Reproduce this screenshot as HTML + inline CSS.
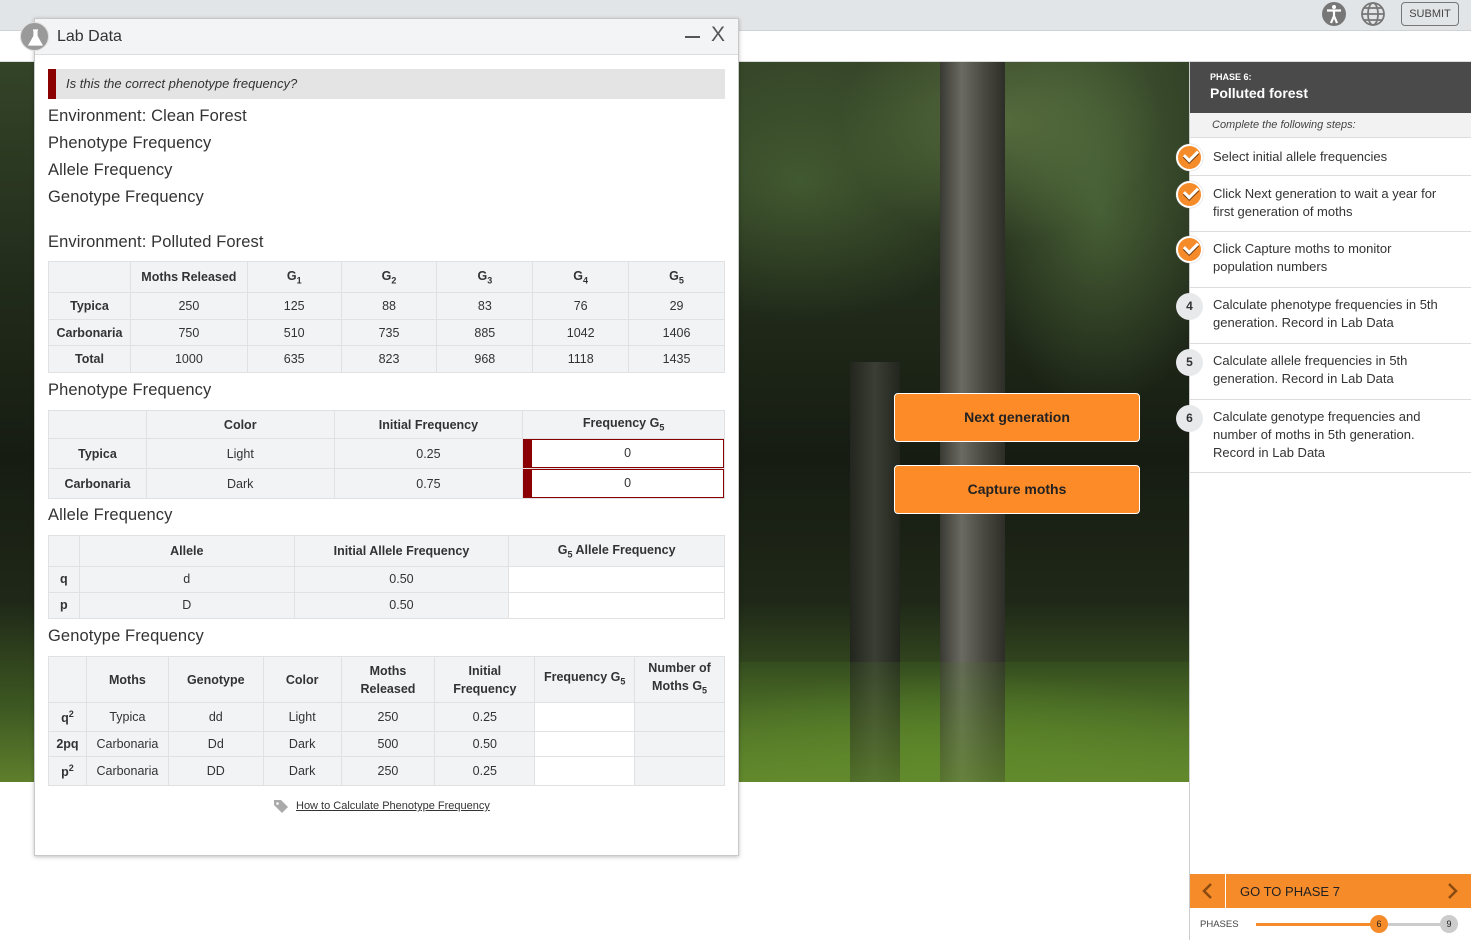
<!DOCTYPE html>
<html><head><meta charset="utf-8"><style>
*{box-sizing:border-box;margin:0;padding:0}
body{width:1471px;height:940px;position:relative;overflow:hidden;background:#fff;font-family:"Liberation Sans",sans-serif;color:#333}
.abs{position:absolute}
.topbar{left:0;top:0;width:1471px;height:31px;background:#e2e5e7;border-bottom:1px solid #d0d3d5}
.forest{left:0;top:62px;width:1189px;height:720px;overflow:hidden;
background:
radial-gradient(ellipse 120px 200px at 1100px 150px,rgba(110,150,80,.45),transparent),
radial-gradient(ellipse 200px 140px at 800px 120px,rgba(100,140,70,.4),transparent),
radial-gradient(ellipse 160px 120px at 1000px 60px,rgba(130,160,90,.45),transparent),
radial-gradient(ellipse 300px 90px at 960px 700px,rgba(90,140,40,.8),transparent),
linear-gradient(180deg,#344428 0%,#222c1b 30%,#161c12 55%,#1f2818 75%,#3e5a22 90%,#5f7f2c 100%)}
.modal{left:34px;top:18px;width:705px;height:838px;background:#fff;border:1px solid #c8c8c8;box-shadow:0 1px 4px rgba(0,0,0,.25)}
.mhead{left:0;top:0;width:703px;height:36px;background:#f3f4f6;border-bottom:1px solid #ddd}
.h{font-size:16.5px;color:#333;letter-spacing:.1px}
table{border-collapse:collapse;position:absolute;left:13px;width:677px;font-size:12.5px;text-align:center}
td,th{border:1px solid #e0e1e3;background:#f2f3f5;padding:0}
th{font-weight:bold}
td.w{background:#fff}
td.b{font-weight:bold}
td.r{background:#fff;position:relative}
td.r div{position:absolute;left:0;top:0;right:0;bottom:0;border:1px solid #8b0000;border-left:9px solid #8b0000;line-height:26px}
sub,sup{font-size:9px}
.panel{left:1189px;top:62px;width:282px;height:878px;background:#fff;border-left:1px solid #ccc}
.step{position:absolute;left:0;width:282px;border-bottom:1px solid #ddd;font-size:13px;color:#333;line-height:18px;padding-left:23px;padding-right:20px}
.ck{position:absolute;left:-14px;width:27px;height:27px;border-radius:50%;background:#f68b2a;border:2px solid #fff;box-shadow:0 0 1px #999}
.num{position:absolute;left:-14px;width:27px;height:27px;border-radius:50%;background:#e8e9eb;font-size:12px;font-weight:bold;text-align:center;line-height:27px;color:#333}
.btn{left:894px;width:246px;height:49px;background:#fd8b28;border:1px solid #fff;border-radius:4px;font-weight:bold;font-size:14px;text-align:center;line-height:47px;color:#222}
.ck::after{content:"";position:absolute;left:6px;top:4px;width:11px;height:6px;border-left:3px solid #fff;border-bottom:3px solid #fff;transform:rotate(-45deg);box-shadow:-1px 1px 0 #6b3a10}
</style></head><body>
<div class="abs topbar"></div>
<div class="abs" style="left:0;top:31px;width:1471px;height:31px;background:#fff;border-bottom:1px solid #ddd"></div>
<svg class="abs" style="left:1321px;top:1px" width="26" height="26" viewBox="0 0 26 26"><circle cx="13" cy="13" r="12" fill="#777"/><circle cx="13" cy="6" r="2" fill="#fff"/><path d="M6 9.5 L20 9.5 M13 9.5 L13 15 M13 15 L10 22 M13 15 L16 22" stroke="#fff" stroke-width="2.2" fill="none"/></svg>
<svg class="abs" style="left:1360px;top:1px" width="26" height="26" viewBox="0 0 26 26"><g fill="none" stroke="#777" stroke-width="1.8"><circle cx="13" cy="13" r="11"/><ellipse cx="13" cy="13" rx="5" ry="11"/><path d="M2 13h22M4 7h18M4 19h18"/></g></svg>
<div class="abs" style="left:1401px;top:2px;width:58px;height:24px;border:1px solid #777;border-radius:4px;font-size:11px;text-align:center;line-height:22px;color:#444">SUBMIT</div>

<div class="abs forest">
<div class="abs" style="left:940px;top:0;width:65px;height:720px;background:linear-gradient(90deg,#3a3a34,#6a6a62,#4a4a42,#2e2e28)"></div>
<div class="abs" style="left:850px;top:300px;width:50px;height:420px;background:linear-gradient(90deg,#22261e,#3a3e34,#22261e)"></div>
<div class="abs" style="left:740px;top:600px;width:450px;height:120px;background:linear-gradient(180deg,rgba(70,110,35,.2),rgba(100,140,45,.7))"></div>
</div>

<div class="abs btn" style="top:393px">Next generation</div>
<div class="abs btn" style="top:465px">Capture moths</div>

<div class="abs modal">
<div class="abs mhead"><div class="abs" style="left:22px;top:9px;font-size:16px;color:#333">Lab Data</div>
<div class="abs" style="left:650px;top:17px;width:15px;height:2px;background:#555"></div>
<div class="abs" style="left:676px;top:4px;font-size:21px;color:#555">X</div></div>
<div class="abs" style="left:-15px;top:3px;width:29px;height:29px;border-radius:50%;background:#9a9a9a;border:1px solid #ddd"><svg width="29" height="29" viewBox="0 0 29 29"><path d="M12 7h5M13 7v6l-5 9h13l-5-9V7" fill="#fff" stroke="#fff" stroke-width="1.2"/></svg></div>
<div class="abs" style="left:13px;top:50px;width:677px;height:30px;background:#e4e4e4;border-left:8px solid #8b0000;font-style:italic;font-size:13px;line-height:30px;padding-left:10px">Is this the correct phenotype frequency?</div>
<div class="abs h" style="left:13px;top:88px">Environment: Clean Forest</div>
<div class="abs h" style="left:13px;top:115px">Phenotype Frequency</div>
<div class="abs h" style="left:13px;top:142px">Allele Frequency</div>
<div class="abs h" style="left:13px;top:169px">Genotype Frequency</div>
<div class="abs h" style="left:13px;top:214px">Environment: Polluted Forest</div>
<table style="top:242px;height:112px"><colgroup><col width="82"><col width="117"><col width="94"><col width="96"><col width="96"><col width="96"><col width="96"></colgroup>
<tr><th></th><th>Moths Released</th><th>G<sub>1</sub></th><th>G<sub>2</sub></th><th>G<sub>3</sub></th><th>G<sub>4</sub></th><th>G<sub>5</sub></th></tr>
<tr><td class="b">Typica</td><td>250</td><td>125</td><td>88</td><td>83</td><td>76</td><td>29</td></tr>
<tr><td class="b">Carbonaria</td><td>750</td><td>510</td><td>735</td><td>885</td><td>1042</td><td>1406</td></tr>
<tr><td class="b">Total</td><td>1000</td><td>635</td><td>823</td><td>968</td><td>1118</td><td>1435</td></tr></table>
<div class="abs h" style="left:13px;top:362px">Phenotype Frequency</div>
<table style="top:391px;height:88px"><colgroup><col width="98"><col width="188"><col width="189"><col width="202"></colgroup>
<tr style="height:28px"><th></th><th>Color</th><th>Initial Frequency</th><th>Frequency G<sub>5</sub></th></tr>
<tr style="height:30px"><td class="b">Typica</td><td>Light</td><td>0.25</td><td class="r"><div>0</div></td></tr>
<tr style="height:30px"><td class="b">Carbonaria</td><td>Dark</td><td>0.75</td><td class="r"><div>0</div></td></tr></table>
<div class="abs h" style="left:13px;top:487px">Allele Frequency</div>
<table style="top:516px;height:84px"><colgroup><col width="31"><col width="215"><col width="215"><col width="216"></colgroup>
<tr><th></th><th>Allele</th><th>Initial Allele Frequency</th><th>G<sub>5</sub> Allele Frequency</th></tr>
<tr><td class="b" style="text-align:left;padding-left:11px">q</td><td>d</td><td>0.50</td><td class="w"></td></tr>
<tr><td class="b" style="text-align:left;padding-left:11px">p</td><td>D</td><td>0.50</td><td class="w"></td></tr></table>
<div class="abs h" style="left:13px;top:608px">Genotype Frequency</div>
<table style="top:637px;height:130px"><colgroup><col width="38"><col width="82"><col width="95"><col width="78"><col width="94"><col width="100"><col width="100"><col width="90"></colgroup>
<tr style="height:46px;line-height:18px"><th></th><th>Moths</th><th>Genotype</th><th>Color</th><th>Moths<br>Released</th><th>Initial<br>Frequency</th><th>Frequency G<sub>5</sub></th><th>Number of<br>Moths G<sub>5</sub></th></tr>
<tr><td class="b">q<sup>2</sup></td><td>Typica</td><td>dd</td><td>Light</td><td>250</td><td>0.25</td><td class="w"></td><td></td></tr>
<tr><td class="b">2pq</td><td>Carbonaria</td><td>Dd</td><td>Dark</td><td>500</td><td>0.50</td><td class="w"></td><td></td></tr>
<tr><td class="b">p<sup>2</sup></td><td>Carbonaria</td><td>DD</td><td>Dark</td><td>250</td><td>0.25</td><td class="w"></td><td></td></tr></table>
<svg class="abs" style="left:238px;top:780px" width="16" height="16" viewBox="0 0 16 16"><path d="M1 1h7l7 7-6 6-8-8z" fill="#aaa"/><circle cx="4.5" cy="4.5" r="1.3" fill="#fff"/></svg>
<div class="abs" style="left:261px;top:781px;font-size:11px;text-decoration:underline;color:#333">How to Calculate Phenotype Frequency</div>
</div>

<div class="abs panel">
<div class="abs" style="left:0;top:0;width:282px;height:51px;background:#4a4a4a;color:#fff;padding-left:20px">
<div style="font-size:9px;font-weight:bold;margin-top:10px">PHASE 6:</div>
<div style="font-size:14px;font-weight:bold;margin-top:3px">Polluted forest</div></div>
<div class="abs" style="left:0;top:51px;width:282px;height:25px;background:#f2f2f2;border-bottom:1px solid #ddd;font-size:11px;font-style:italic;line-height:25px;padding-left:22px;color:#444">Complete the following steps:</div>
<div class="step" style="top:76px;height:38px;padding-top:10px"><div class="ck" style="top:6px"></div>Select initial allele frequencies</div>
<div class="step" style="top:114px;height:56px;padding-top:9px"><div class="ck" style="top:5px"></div>Click Next generation to wait a year for first generation of moths</div>
<div class="step" style="top:170px;height:56px;padding-top:8px"><div class="ck" style="top:4px"></div>Click Capture moths to monitor population numbers</div>
<div class="step" style="top:226px;height:56px;padding-top:8px"><div class="num" style="top:5px">4</div>Calculate phenotype frequencies in 5th generation. Record in Lab Data</div>
<div class="step" style="top:282px;height:56px;padding-top:8px"><div class="num" style="top:5px">5</div>Calculate allele frequencies in 5th generation. Record in Lab Data</div>
<div class="step" style="top:338px;height:73px;padding-top:8px"><div class="num" style="top:5px">6</div>Calculate genotype frequencies and number of moths in 5th generation. Record in Lab Data</div>
<div class="abs" style="left:0;top:812px;width:282px;height:34px;background:#f68b2a"></div>
<div class="abs" style="left:35px;top:812px;width:1px;height:34px;background:#fff"></div>
<svg class="abs" style="left:10px;top:820px" width="14" height="18"><path d="M11 2L4 9l7 7" stroke="#8a4a10" stroke-width="2.5" fill="none"/></svg>
<svg class="abs" style="left:256px;top:820px" width="14" height="18"><path d="M3 2l7 7-7 7" stroke="#8a4a10" stroke-width="2.5" fill="none"/></svg>
<div class="abs" style="left:50px;top:822px;font-size:13px;color:#222">GO TO PHASE 7</div>
<div class="abs" style="left:10px;top:857px;font-size:9.5px;color:#444">PHASES</div>
<div class="abs" style="left:66px;top:861px;width:190px;height:3px;background:#ccc"></div>
<div class="abs" style="left:66px;top:861px;width:124px;height:3px;background:#f68b2a"></div>
<div class="abs" style="left:180px;top:853px;width:18px;height:18px;border-radius:50%;background:#f68b2a;font-size:9px;text-align:center;line-height:18px;color:#222">6</div>
<div class="abs" style="left:250px;top:853px;width:18px;height:18px;border-radius:50%;background:#ccc;font-size:9px;text-align:center;line-height:18px;color:#222">9</div>
</div>
</body></html>
